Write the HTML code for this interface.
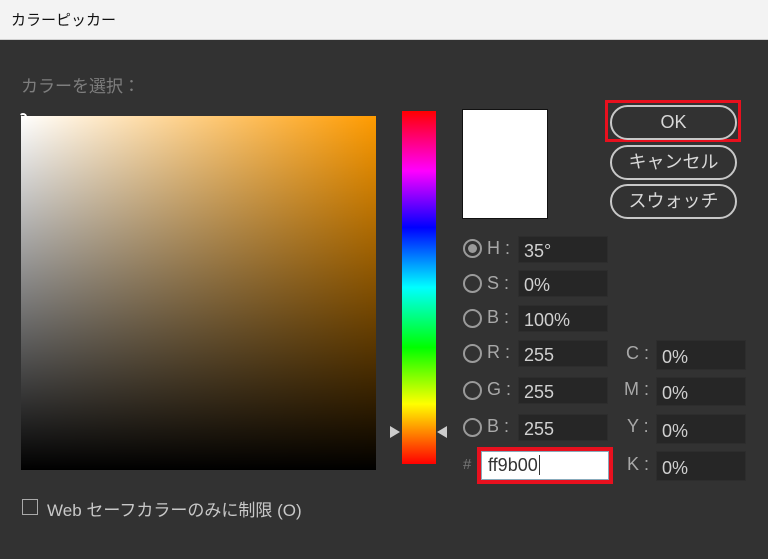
<!DOCTYPE html><html><head><meta charset="utf-8"><style>
*{box-sizing:border-box;margin:0;padding:0}
body{width:768px;height:559px;background:#323232;font-family:"Liberation Sans","Noto Sans CJK JP",sans-serif;position:relative;overflow:hidden;color:#b8b8b8}
.a{position:absolute}
.title{left:0;top:0;width:768px;height:40px;background:#f3f3f3;border-bottom:1px solid #d0d0d0}
.title span{position:absolute;left:11px;top:9px;font-size:15px;color:#111}
.btn{position:absolute;left:610px;width:127px;height:35px;border:2px solid #c8c8c8;border-radius:18px;color:#d8d8d8;font-size:18px;text-align:center;line-height:31px}
.inp{position:absolute;width:90px;height:27px;background:#262626;border:1px solid #2d2d2d;color:#d0d0d0;font-size:18px;padding-left:5px;line-height:28px}
.lab{position:absolute;font-size:18px;color:#a8a8a8}
.rad{position:absolute;left:463px;width:19px;height:19px;border:2px solid #9a9a9a;border-radius:50%}
</style></head><body>
<div class="a title"><span>カラーピッカー</span></div>
<div class="a" style="left:21px;top:72px;font-size:17px;color:#7e7e7e">カラーを選択：</div>
<div class="a" style="left:21px;top:116px;width:355px;height:354px;background:linear-gradient(to bottom,rgba(0,0,0,0),#000),linear-gradient(to right,#fff,#ff9b00)"></div>
<div class="a" style="left:19px;top:113px;width:8px;height:8px;border:2px solid #fff;border-radius:50%;border-left-color:transparent;border-bottom-color:transparent"></div>
<div class="a" style="left:402px;top:111px;width:34px;height:353px;background:linear-gradient(to bottom,#f00 0%,#f0f 17%,#00f 33%,#0ff 50%,#0f0 67%,#ff0 83%,#f00 100%)"></div>
<div class="a" style="left:390px;top:426px;width:0;height:0;border-top:6px solid transparent;border-bottom:6px solid transparent;border-left:10px solid #ccc"></div>
<div class="a" style="left:437px;top:426px;width:0;height:0;border-top:6px solid transparent;border-bottom:6px solid transparent;border-right:10px solid #ccc"></div>
<div class="a" style="left:462px;top:109px;width:86px;height:110px;background:#fff;border:1px solid #111"></div>
<div class="a" style="left:605px;top:100px;width:136px;height:42px;border:3px solid #e8101e"></div>
<div class="btn" style="top:105px">OK</div>
<div class="btn" style="top:145px">キャンセル</div>
<div class="btn" style="top:184px">スウォッチ</div>

<div class="rad" style="top:239px"><div style="position:absolute;left:3px;top:3px;width:9px;height:9px;border-radius:50%;background:#9a9a9a"></div></div>
<div class="lab" style="left:487px;top:238px">H :</div><div class="inp" style="left:518px;top:236px">35°</div>
<div class="rad" style="top:274px"></div><div class="lab" style="left:487px;top:273px">S :</div><div class="inp" style="left:518px;top:270px">0%</div>
<div class="rad" style="top:309px"></div><div class="lab" style="left:487px;top:307px">B :</div><div class="inp" style="left:518px;top:305px">100%</div>
<div class="rad" style="top:344px"></div><div class="lab" style="left:487px;top:342px">R :</div><div class="inp" style="left:518px;top:340px">255</div>
<div class="rad" style="top:381px"></div><div class="lab" style="left:487px;top:379px">G :</div><div class="inp" style="left:518px;top:377px">255</div>
<div class="rad" style="top:418px"></div><div class="lab" style="left:487px;top:416px">B :</div><div class="inp" style="left:518px;top:414px">255</div>
<div class="lab" style="left:463px;top:456px;font-size:15px;color:#777">#</div>
<div class="a" style="left:477px;top:447px;width:136px;height:37px;border:4px solid #e8101e;background:#fff"><div style="position:absolute;left:0;top:0;right:0;bottom:0;border:1px solid #8ab;padding-left:6px;font-size:18px;color:#333;line-height:27px">ff9b00<span style="border-left:1px solid #333;margin-left:1px"></span></div></div>

<div class="lab" style="left:626px;top:343px">C :</div><div class="inp" style="left:656px;top:340px;height:30px;line-height:32px">0%</div>
<div class="lab" style="left:624px;top:379px">M :</div><div class="inp" style="left:656px;top:377px;height:29px;line-height:31px">0%</div>
<div class="lab" style="left:627px;top:416px">Y :</div><div class="inp" style="left:656px;top:414px;height:30px;line-height:32px">0%</div>
<div class="lab" style="left:627px;top:454px">K :</div><div class="inp" style="left:656px;top:451px;height:30px;line-height:32px">0%</div>

<div class="a" style="left:22px;top:499px;width:16px;height:16px;border:1px solid #aaa"></div>
<div class="a" style="left:47px;top:496px;font-size:17px;color:#c8c8c8">Web セーフカラーのみに制限 (O)</div>
</body></html>
